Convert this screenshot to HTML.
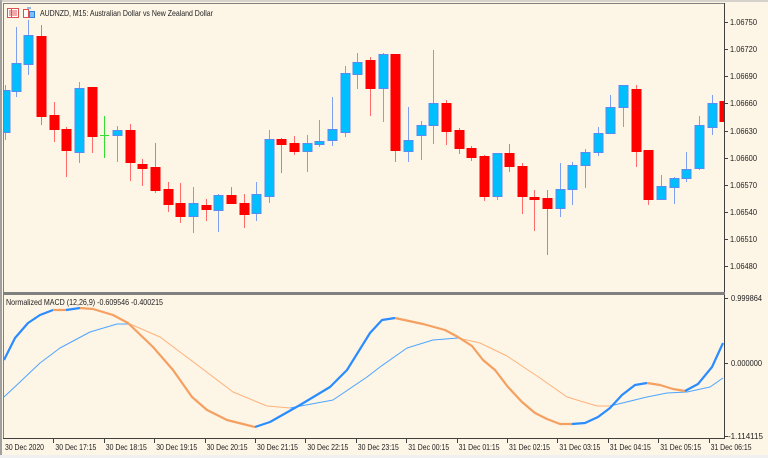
<!DOCTYPE html>
<html><head><meta charset="utf-8"><style>
html,body{margin:0;padding:0;background:#f0f0f0;}
#w{position:relative;width:768px;height:458px;overflow:hidden;background:#f0f0f0;}
svg{position:absolute;left:0;top:0;}
text{font-family:"Liberation Sans",sans-serif;font-size:8.5px;fill:#222;}
</style></head><body><div id="w">
<svg width="768" height="458" viewBox="0 0 768 458" xmlns="http://www.w3.org/2000/svg">
<rect x="0" y="0" width="768" height="456" fill="#fdf5e6"/>
<rect x="0" y="0" width="2" height="456" fill="#a0a0a0"/>
<line x1="0" y1="1" x2="768" y2="1" stroke="#b0b0b0"/>
<rect x="0" y="455" width="768" height="3" fill="#f0f0f0"/>
<g id="candles"></g>
<g id="macd" fill="none"></g>
<line x1="3" y1="3.5" x2="725" y2="3.5" stroke="#808080"/>
<line x1="3.5" y1="3" x2="3.5" y2="439" stroke="#808080"/>
<line x1="724.5" y1="3" x2="724.5" y2="439" stroke="#404040"/>
<rect x="3" y="292" width="722" height="3" fill="#808080"/>
<line x1="3" y1="438.5" x2="725" y2="438.5" stroke="#404040"/>
<g id="ticks" stroke="#404040"></g>
<rect x="7.5" y="8.5" width="11" height="9" fill="#fff" stroke="#e05050"/>
<line x1="9" y1="11" x2="17" y2="11" stroke="#e05050"/><line x1="9" y1="13" x2="17" y2="13" stroke="#e05050"/><line x1="9" y1="15" x2="17" y2="15" stroke="#e05050"/>
<line x1="11.5" y1="9" x2="11.5" y2="17" stroke="#e05050"/>
<rect x="23.5" y="9.5" width="5" height="8" fill="#fff" stroke="#e05050"/>
<rect x="29.5" y="11.5" width="5" height="6" fill="#7fbfff" stroke="#3080e0"/>
<line x1="27" y1="8" x2="31" y2="8" stroke="#3080e0"/>
<text x="40" y="16" textLength="173" lengthAdjust="spacingAndGlyphs">AUDNZD, M15:  Australian Dollar vs New Zealand Dollar</text>
<text x="6" y="305" textLength="157" lengthAdjust="spacingAndGlyphs">Normalized MACD (12,26,9) -0.609546 -0.400215</text>
<g id="paxis"></g>
<g id="plabels"></g>
<g id="tlabels"></g>
</svg>
</div>
<script>
var NS="http://www.w3.org/2000/svg";
function el(p,t,a){var e=document.createElementNS(NS,t);for(var k in a)e.setAttribute(k,a[k]);p.appendChild(e);return e;}
var C=[
[5,85,90,132,140,1],[15.7,27,63,91,97,1],[28.3,20,35,64,75,1],[41,25,36,116,125,0],[53.7,102,115,129,142,0],
[66.3,127,129,150,177,0],[79,82,88,152,163,1],[91.7,87,87,136,153,0],[104.3,116,135,135,158,2],[117,126,130,135,162,1],
[129.7,124,130,162,181,0],[142.3,159,164,168,186,0],[155,143,167,190,193,0],[167.7,182,189,204,212,0],[180.3,183,203,216,223,0],
[193,187,203,216,233,1],[205.7,199,205,209,221,0],[218.3,194,195,210,232,1],[231,187,195,203,204,0],[243.7,194,203,214,228,0],
[256.3,182,194,213,221,1],[268.7,130,139,196,203,1],[281.3,138,139,144,173,0],[294,136,143,151,155,0],[306.7,135,143,151,172,1],
[319.3,120,141,144,147,1],[332,97,129,140,146,1],[344.7,66,73,132,137,1],[357.3,53,62,74,89,1],[370,57,60,88,116,0],
[382.7,53,54,88,122,1],[395.3,54,54,150,162,0],[408,107,140,151,162,1],[420.7,121,125,135,160,1],[433.3,50,103,125,144,1],
[446,100,103,131,145,0],[458.7,128,130,148,154,0],[471.3,146,148,157,161,0],[484,155,156,196,201,0],[496.7,153,153,196,200,1],
[508.7,144,153,166,172,0],[521.7,163,166,196,214,0],[534.3,190,197,199,231,0],[547,190,198,208,255,0],[559.7,163,189,208,217,1],
[572.3,162,165,189,205,1],[585,149,152,165,188,1],[597.7,127,133,152,156,1],[610.3,95,107,133,133,1],[623,85,85,107,127,1],
[635.7,85,89,151,167,0],[648.3,150,150,199,205,0],[661,175,186,199,200,1],[673.7,177,178,187,204,1],[686.3,152,169,178,182,1],
[699,116,125,168,170,1],[711.7,95,103,127,135,1],[724.3,95,101,121,121,0]];
var g=document.getElementById("candles");
var cp=el(g,"clipPath",{id:"cl"});el(cp,"rect",{x:4,y:4,width:720,height:288});
var gg=el(g,"g",{"clip-path":"url(#cl)"});
C.forEach(function(c){var x=Math.round(c[0])+0.5;
 var wc=c[5]==1?"#7f9ff0":c[5]==0?"#ff6a6a":"#33dd33";
 el(gg,"line",{x1:x,y1:c[1],x2:x,y2:c[4],stroke:wc});
 if(c[5]==2){el(gg,"line",{x1:x-4.5,y1:c[2]+0.5,x2:x+4.5,y2:c[2]+0.5,stroke:"#33dd33"});return;}
 var h=Math.max(c[3]-c[2],2);
 el(gg,"rect",{x:x-4.5,y:c[2]+0.5,width:9,height:h,fill:c[5]==1?"#00bfff":"#ff0000",stroke:c[5]==1?"#5a8cf0":"#ff0000"});
});
var m=document.getElementById("macd");
function pl(pts,col,w){el(m,"polyline",{points:pts.map(function(p){return p.join(",")}).join(" "),stroke:col,"stroke-width":w,"stroke-linejoin":"round"});}
pl([[4,397],[20,382],[40,363],[60,348],[90,332],[117,324],[130,324]],"#4ea5ff",1);
pl([[130,324],[160,337],[200,367],[233,392],[267,406],[290,408]],"#ffb27a",1);
pl([[290,408],[333,400],[367,377],[380,367],[407,348],[433,340],[458,338]],"#4ea5ff",1);
pl([[458,338],[480,343],[507,356],[540,378],[567,397],[597,406],[610,406]],"#ffb27a",1);
pl([[610,406],[647,397],[667,393],[687,392],[710,387],[723,378]],"#4ea5ff",1);
pl([[4,360],[15,338],[28,323],[40,315],[53,310]],"#2a8cff",2.2);
pl([[53,310],[66,310]],"#f5a060",2.2);
pl([[66,310],[80,308]],"#2a8cff",2.2);
pl([[80,308],[93,309],[113,315],[128,323],[153,347],[173,370],[192,397],[207,410],[227,420],[255,427]],"#f5a060",2.2);
pl([[255,427],[270,422],[300,405],[330,387],[347,370],[370,333],[382,320],[395,318]],"#2a8cff",2.2);
pl([[395,318],[423,324],[445,330],[458,337],[472,346],[483,360],[495,370],[508,387],[522,402],[535,413],[547,419],[560,424],[572,424]],"#f5a060",2.2);
pl([[572,424],[585,423],[598,417],[610,408],[622,395],[635,385],[647,383]],"#2a8cff",2.2);
pl([[647,383],[660,385],[673,389],[685,391]],"#f5a060",2.2);
pl([[685,391],[698,384],[712,367],[723,343]],"#2a8cff",2.2);
var pa=document.getElementById("paxis"),pl2=document.getElementById("plabels");
var P=[["1.06750",22],["1.06720",49],["1.06690",76],["1.06660",103],["1.06630",131],["1.06600",158],["1.06570",185],["1.06540",212],["1.06510",239],["1.06480",266]];
P.forEach(function(p){el(pa,"line",{x1:725,y1:p[1]+0.5,x2:728,y2:p[1]+0.5,stroke:"#404040"});
 var t=el(pl2,"text",{x:730,y:p[1]+3,textLength:27,lengthAdjust:"spacingAndGlyphs"});t.textContent=p[0];});
[["0.999864",298,731,31],["0.000000",363,731,31],["-1.114115",436,728,35]].forEach(function(p){
 el(pa,"line",{x1:725,y1:p[1]+0.5,x2:728,y2:p[1]+0.5,stroke:"#404040"});
 var t=el(pl2,"text",{x:p[2],y:p[1]+3,textLength:p[3],lengthAdjust:"spacingAndGlyphs"});t.textContent=p[0];});
var tl=document.getElementById("tlabels"),tk=document.getElementById("ticks");
var L=["30 Dec 2020","30 Dec 17:15","30 Dec 18:15","30 Dec 19:15","30 Dec 20:15","30 Dec 21:15","30 Dec 22:15","30 Dec 23:15","31 Dec 00:15","31 Dec 01:15","31 Dec 02:15","31 Dec 03:15","31 Dec 04:15","31 Dec 05:15","31 Dec 06:15"];
L.forEach(function(s,i){var x=3+i*50.4;
 if(i>0)el(tk,"line",{x1:Math.round(x)+0.5,y1:439,x2:Math.round(x)+0.5,y2:443});
 var t=el(tl,"text",{x:x+2,y:450,textLength:i==0?39:41,lengthAdjust:"spacingAndGlyphs"});t.textContent=s;});
</script>
</body></html>
